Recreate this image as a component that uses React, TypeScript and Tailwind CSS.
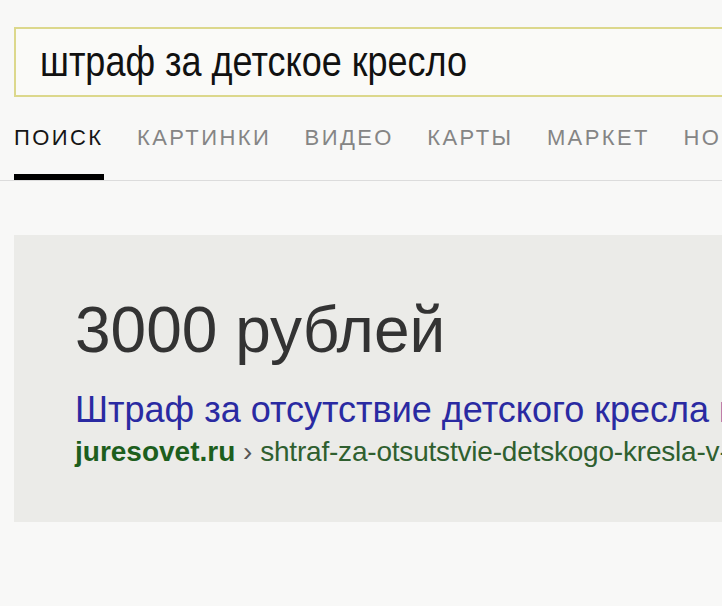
export default function App() {
  const tabs = ['ПОИСК', 'КАРТИНКИ', 'ВИДЕО', 'КАРТЫ', 'МАРКЕТ', 'НОВОСТИ'];
  return (
    <div className="h-[606px] w-[722px] overflow-hidden bg-[#f8f8f7] font-['Liberation_Sans',Arial,sans-serif]">
      <div className="pt-[27px] pl-[14px]">
        <div className="flex h-[70px] w-[760px] items-center border-2 border-[#dcd88c] bg-[#fafaf8] pl-[24px]">
          <span className="block origin-center scale-y-[1.18] text-[36px] leading-none text-[#111]">
            штраф за детское кресло
          </span>
        </div>
      </div>
      <div className="mt-[28px] border-b border-[#dcdcdc]">
        <div className="flex gap-[33.5px] whitespace-nowrap pl-[14px]">
          {tabs.map((t, i) => (
            <div key={t} className="relative flex h-[55px] flex-col">
              <span
                className={
                  'pt-[2px] text-[22px] leading-[22px] tracking-[2.4px] ' +
                  (i === 0 ? 'text-[#151515]' : 'text-[#858585]')
                }
              >
                {t}
              </span>
              {i === 0 && <div className="absolute bottom-0 left-0 h-[6px] w-[90px] bg-black" />}
            </div>
          ))}
        </div>
      </div>
      <div className="mt-[54px] ml-[14px] h-[287px] bg-[#ebebe8] pt-[63px] pl-[61px] whitespace-nowrap">
        <div className="text-[64px] leading-none text-[#333]">3000 рублей</div>
        <div className="mt-[30px] text-[36px] leading-none text-[#2a2aa2]">Штраф за отсутствие детского кресла на</div>
        <div className="mt-[10px] text-[28px] leading-none">
          <span className="font-bold text-[#1d5e1d]">juresovet.ru</span>
          <span className="text-[#555]"> › </span>
          <span className="tracking-[-0.2px] text-[#2f5f2f]">shtraf-za-otsutstvie-detskogo-kresla-v-avtomobile</span>
        </div>
      </div>
    </div>
  );
}
